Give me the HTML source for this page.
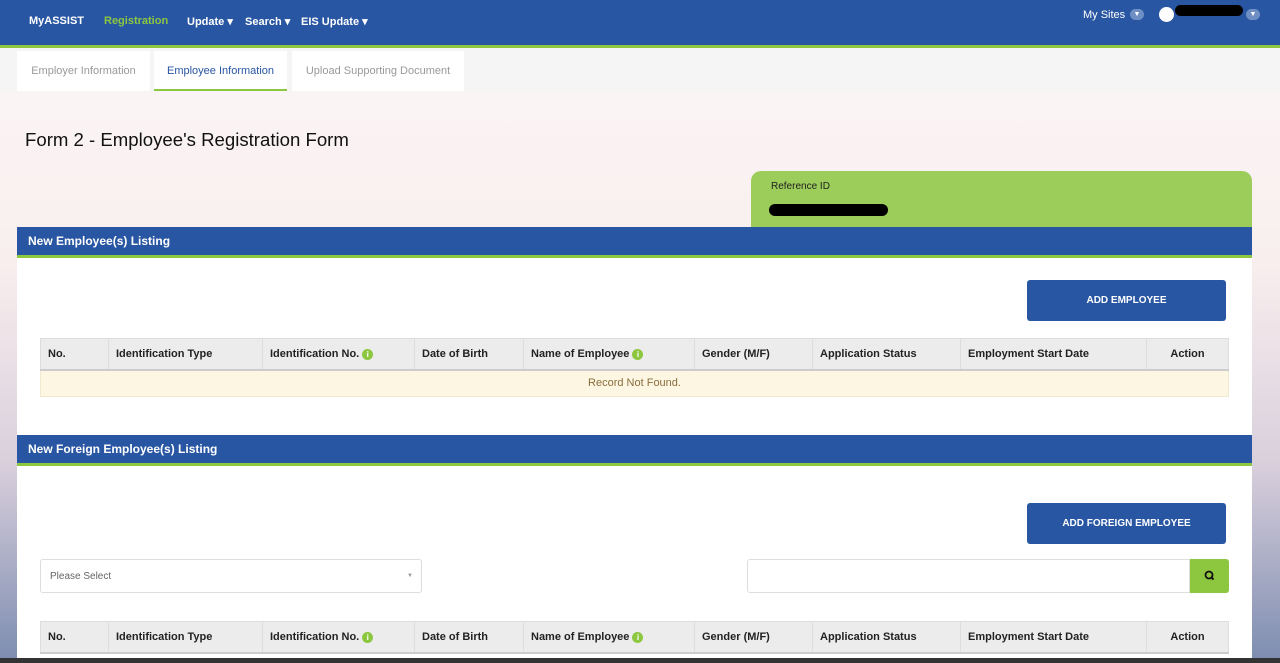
<!DOCTYPE html>
<html><head><meta charset="utf-8"><style>
*{margin:0;padding:0;box-sizing:border-box}
body{width:1280px;height:663px;overflow:hidden;position:relative;font-family:"Liberation Sans",Arial,sans-serif;background:linear-gradient(180deg,#fdf8f8 0%,#f8eeee 40%,#d9cfdc 70%,#7c8cb0 100%)}
.a{position:absolute}
.nav{left:0;top:0;width:1280px;height:48px;background:#2856a3;border-bottom:3px solid #8dc63f}
.nav span{position:absolute;top:15px;font-size:11px;font-weight:bold;color:#fff;white-space:nowrap}
.dd{position:absolute;top:9px;width:14px;height:11px;border-radius:6px;background:#6f8fc4;color:#fff;font-size:7px;text-align:center;line-height:11px}
.tabs{left:0;top:48px;width:1280px;height:44px;background:#f5f5f5}
.tab{position:absolute;top:3px;height:40px;background:#fff;font-size:11px;color:#999;line-height:40px;text-align:center}
.bar{left:17px;width:1235px;height:31px;background:#2856a3;border-bottom:3px solid #8dc63f;color:#fff;font-size:12px;font-weight:bold;padding:7px 11px}
.panel{left:17px;width:1235px;background:#fff}
.btn{background:#2856a3;color:#fff;font-size:10px;font-weight:bold;text-align:center;border-radius:3px;line-height:41px;width:199px;height:41px;left:1027px}
table{position:absolute;left:40px;width:1189px;border-collapse:collapse;font-size:11px;table-layout:fixed}
th{background:#ececec;border:1px solid #ddd;border-bottom:2px solid #ccc;height:31px;text-align:left;padding-left:7px;font-weight:bold;color:#222;white-space:nowrap;vertical-align:middle}
.i{display:inline-block;width:11px;height:11px;border-radius:50%;background:#8dc63f;color:#fff;font-size:8px;text-align:center;line-height:11px;vertical-align:0}
</style></head><body>
<div class="a nav">
<span style="left:29px">MyASSIST</span>
<span style="left:104px;color:#8dc63f">Registration</span>
<span style="left:187px">Update ▾</span>
<span style="left:245px">Search ▾</span>
<span style="left:301px">EIS Update ▾</span>
<span style="left:1083px;top:9px;font-weight:normal">My Sites</span>
<div class="dd" style="left:1130px">▼</div>
<div class="a" style="left:1159px;top:7px;width:15px;height:15px;border-radius:50%;background:#fff"></div>
<div class="a" style="left:1175px;top:5px;width:68px;height:11px;border-radius:6px;background:#000"></div>
<div class="dd" style="left:1246px">▼</div>
</div>
<div class="a tabs">
<div class="tab" style="left:17px;width:133px">Employer Information</div>
<div class="tab" style="left:154px;width:133px;color:#2856a3;border-bottom:2px solid #8dc63f">Employee Information</div>
<div class="tab" style="left:292px;width:172px">Upload Supporting Document</div>
</div>
<div class="a" style="left:25px;top:129px;font-size:18.6px;color:#111">Form 2 - Employee's Registration Form</div>
<div class="a" style="left:751px;top:171px;width:501px;height:58px;background:#9ccc5a;border-radius:10px 10px 0 0">
<div class="a" style="left:20px;top:10px;font-size:10px;color:#222">Reference ID</div>
<div class="a" style="left:18px;top:33px;width:119px;height:12px;border-radius:6px;background:#000"></div>
</div>
<div class="a bar" style="top:227px">New Employee(s) Listing</div>
<div class="a panel" style="top:258px;height:177px"></div>
<div class="a btn" style="top:280px">ADD EMPLOYEE</div>
<table style="top:338px">
<tr><th style="width:68px">No.</th><th style="width:154px">Identification Type</th><th style="width:152px">Identification No. <span class="i">i</span></th><th style="width:109px">Date of Birth</th><th style="width:171px">Name of Employee <span class="i">i</span></th><th style="width:118px">Gender (M/F)</th><th style="width:148px">Application Status</th><th style="width:186px">Employment Start Date</th><th style="text-align:center;padding:0">Action</th></tr>
<tr><td colspan="9" style="background:#fcf6e3;border:1px solid #f0ead0;height:27px;text-align:center;color:#8a6d3b;font-size:11px">Record Not Found.</td></tr>
</table>
<div class="a bar" style="top:435px">New Foreign Employee(s) Listing</div>
<div class="a panel" style="top:466px;height:192px"></div>
<div class="a btn" style="top:503px">ADD FOREIGN EMPLOYEE</div>
<div class="a" style="left:40px;top:559px;width:382px;height:34px;border:1px solid #ddd;border-radius:3px;font-size:10px;color:#666;padding:11px 9px">Please Select<span style="position:absolute;right:8px;top:13px;font-size:6px;color:#999">▼</span></div>
<div class="a" style="left:747px;top:559px;width:443px;height:34px;border:1px solid #ddd;border-radius:3px 0 0 3px"></div>
<div class="a" style="left:1190px;top:559px;width:39px;height:34px;background:#8dc63f;border-radius:0 3px 3px 0">
<svg width="39" height="34"><circle cx="19" cy="16" r="3.5" fill="none" stroke="#111" stroke-width="1.8"/><line x1="21.5" y1="18.5" x2="23.5" y2="20.5" stroke="#111" stroke-width="2"/></svg></div>
<table style="top:621px">
<tr><th style="width:68px">No.</th><th style="width:154px">Identification Type</th><th style="width:152px">Identification No. <span class="i">i</span></th><th style="width:109px">Date of Birth</th><th style="width:171px">Name of Employee <span class="i">i</span></th><th style="width:118px">Gender (M/F)</th><th style="width:148px">Application Status</th><th style="width:186px">Employment Start Date</th><th style="text-align:center;padding:0">Action</th></tr>
</table>
<div class="a" style="left:0;top:658px;width:1280px;height:5px;background:#333"></div>
</body></html>
